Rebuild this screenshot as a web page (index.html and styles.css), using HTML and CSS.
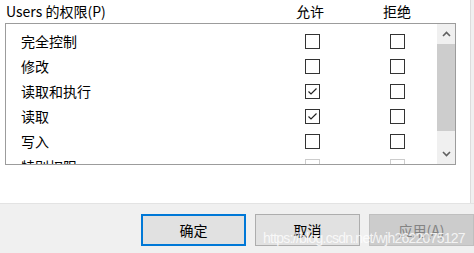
FILE: index.html
```html
<!DOCTYPE html>
<html>
<head>
<meta charset="utf-8">
<link rel="stylesheet" href="styles.css">
</head>
<body>
<div class="window">
  <div class="panel">
    <div class="perm-head">
      <span class="title">Users 的权限(P)</span>
      <span class="col">允许</span>
      <span></span>
      <span class="col">拒绝</span>
    </div>
    <div class="listbox">
      <div class="rows">
        <div class="row"><span class="name">完全控制</span><span class="cell"><i class="cb"></i></span><span></span><span class="cell"><i class="cb"></i></span></div>
        <div class="row"><span class="name">修改</span><span class="cell"><i class="cb"></i></span><span></span><span class="cell"><i class="cb"></i></span></div>
        <div class="row"><span class="name">读取和执行</span><span class="cell"><i class="cb"><svg class="tick" viewBox="0 0 13 13"><polyline points="2.5,6.5 5,9 10.5,3.5"/></svg></i></span><span></span><span class="cell"><i class="cb"></i></span></div>
        <div class="row"><span class="name">读取</span><span class="cell"><i class="cb"><svg class="tick" viewBox="0 0 13 13"><polyline points="2.5,6.5 5,9 10.5,3.5"/></svg></i></span><span></span><span class="cell"><i class="cb"></i></span></div>
        <div class="row"><span class="name">写入</span><span class="cell"><i class="cb"></i></span><span></span><span class="cell"><i class="cb"></i></span></div>
        <div class="row"><span class="name">特别权限</span><span class="cell"><i class="cb off"></i></span><span></span><span class="cell"><i class="cb off"></i></span></div>
      </div>
      <div class="scrollbar">
        <div class="sb-btn"><svg class="chev" viewBox="0 0 9 6"><polyline points="1,5 4.5,1.5 8,5"/></svg></div>
        <div class="sb-thumb"></div>
        <div class="sb-track"></div>
        <div class="sb-btn"><svg class="chev" viewBox="0 0 9 6"><polyline points="1,1 4.5,4.5 8,1"/></svg></div>
      </div>
    </div>
  </div>
  <div class="footer">
    <button class="btn default">确定</button>
    <button class="btn">取消</button>
    <button class="btn disabled">应用(A)</button>
    <span class="watermark">https://blog.csdn.net/wjh2622075127</span>
  </div>
</div>
</body>
</html>
```
FILE: styles.css
```css
html, body {
  margin: 0;
  padding: 0;
}
body {
  width: 474px;
  height: 253px;
  overflow: hidden;
  background: #f0f0f0;
  font-family: "Noto Sans CJK SC", "Open Sans", sans-serif;
  font-size: 14px;
  color: #000;
}
.window {
  display: flex;
  flex-direction: column;
  height: 253px;
}
.panel {
  width: 470px;
  height: 203px;
  background: #fff;
  border-right: 1px solid #dcdcdc;
  flex-shrink: 0;
}
.perm-head {
  display: grid;
  grid-template-columns: 284px 40px 47px 40px;
  padding-left: 6px;
  height: 23px;
  line-height: 23px;
  white-space: nowrap;
}
.col {
  text-align: center;
}
.listbox {
  margin-left: 5px;
  width: 451px;
  height: 142px;
  box-sizing: border-box;
  border: 1px solid #9c9c9c;
  display: flex;
  overflow: hidden;
}
.rows {
  flex: 1;
  padding-top: 5px;
  overflow: hidden;
}
.row {
  display: grid;
  grid-template-columns: 286px 40px 45px 40px;
  height: 25px;
  align-items: center;
  line-height: 25px;
}
.name {
  padding-left: 15px;
  white-space: nowrap;
}
.cell {
  display: flex;
  justify-content: center;
  align-items: center;
}
.cb {
  width: 15px;
  height: 15px;
  box-sizing: border-box;
  border: 1px solid #333;
  background: #fff;
  display: flex;
}
.cb.off {
  border-color: #cccccc;
}
.tick {
  width: 13px;
  height: 13px;
  fill: none;
  stroke: #222;
  stroke-width: 1.2;
}
.scrollbar {
  width: 18px;
  display: flex;
  flex-direction: column;
  background: #f0f0f0;
}
.sb-btn {
  height: 20px;
  display: flex;
  align-items: center;
  justify-content: center;
  flex-shrink: 0;
}
.chev {
  width: 9px;
  height: 6px;
  fill: none;
  stroke: #606060;
  stroke-width: 1.6;
}
.sb-thumb {
  height: 87px;
  background: #cdcdcd;
  flex-shrink: 0;
}
.sb-track {
  flex: 1;
}
.footer {
  position: relative;
  flex: 1;
  border-top: 1px solid #e3e3e3;
  display: flex;
  align-items: flex-start;
  gap: 9px;
  padding: 10px 0 0 141px;
}
.btn {
  width: 105px;
  height: 32px;
  flex-shrink: 0;
  box-sizing: border-box;
  border: 1px solid #adadad;
  background: #e1e1e1;
  font-family: "Noto Sans CJK SC", sans-serif;
  font-size: 14px;
  color: #000;
  padding: 0;
}
.btn.default {
  border: 2px solid #0078d7;
}
.btn.disabled {
  background: #cccccc;
  border-color: #bfbfbf;
  color: #838383;
}
.watermark {
  position: absolute;
  left: 263px;
  top: 26px;
  font-family: "Liberation Sans", sans-serif;
  font-size: 14px;
  line-height: 16px;
  letter-spacing: -0.75px;
  color: rgba(255, 255, 255, 0.8);
  white-space: nowrap;
}
```
